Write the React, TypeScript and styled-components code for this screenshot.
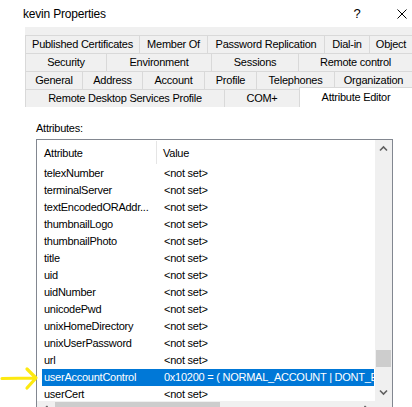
import React from "react";
import styled, { createGlobalStyle } from "styled-components";

const GlobalStyle = createGlobalStyle`
  html, body {
    margin: 0;
    padding: 0;
    background: #ffffff;
    overflow: hidden;
  }
  body {
    font-family: "Liberation Sans", Arial, sans-serif;
    font-size: 11px;
    color: #000;
  }
`;

const Window = styled.div`
  position: relative;
  width: 412px;
  height: 407px;
  overflow: hidden;
  background: #fff;
`;

const TitleBar = styled.div`
  height: 27px;
  display: flex;
  align-items: center;
  padding: 0 4px 0 23px;
  font-size: 12px;
  letter-spacing: -0.2px;
`;

const TitleText = styled.div`
  flex: 1;
  padding-top: 1px;
`;

const TitleButton = styled.div<{ gap?: number }>`
  width: 12px;
  height: 12px;
  display: flex;
  align-items: center;
  justify-content: center;
  margin-left: ${(p) => p.gap ?? 0}px;
  font-size: 13px;
`;

const TabControl = styled.div`
  margin-left: 25px;
  padding-top: 8px;
  background: #f0f0f0;
`;

const TabRow = styled.div`
  display: flex;
  height: 18px;
`;

const Tab = styled.div<{ w?: number; selected?: boolean }>`
  box-sizing: border-box;
  ${(p) => (p.w ? `width: ${p.w}px;` : "flex: 1;")}
  height: ${(p) => (p.selected ? 20 : 18)}px;
  margin-top: ${(p) => (p.selected ? -2 : 0)}px;
  position: relative;
  z-index: ${(p) => (p.selected ? 1 : 0)};
  background: ${(p) => (p.selected ? "#ffffff" : "#f0f0f0")};
  border-top: 1px solid #d9d9d9;
  border-left: 1px solid #d9d9d9;
  text-align: center;
  line-height: ${(p) => (p.selected ? 18 : 16)}px;
  letter-spacing: -0.25px;
  white-space: nowrap;
  overflow: hidden;
`;

const Panel = styled.div`
  padding: 0 19px 0 36px;
`;

const FieldLabel = styled.div`
  margin-top: 14px;
  line-height: 14px;
  letter-spacing: -0.25px;
`;

const ListBox = styled.div`
  margin-top: 4px;
  width: 357px;
  height: 290px;
  box-sizing: border-box;
  border: 1px solid #828790;
  display: grid;
  grid-template-columns: 338px 17px;
  grid-template-rows: 261px 17px;
`;

const ListArea = styled.div`
  overflow: hidden;
  display: flex;
  flex-direction: column;
`;

const Header = styled.div`
  height: 25px;
  display: flex;
  align-items: center;
  letter-spacing: -0.25px;
`;

const HeaderCell = styled.div<{ w?: number; pad: number }>`
  ${(p) => (p.w ? `width: ${p.w}px; border-right: 1px solid #e5e5e5;` : "flex: 1;")}
  box-sizing: border-box;
  height: 23px;
  line-height: 24px;
  padding-left: ${(p) => p.pad}px;
`;

const Rows = styled.div`
  flex: 1;
  overflow: hidden;
  padding: 0 1px 0 5px;
`;

const Row = styled.div<{ selected?: boolean }>`
  display: flex;
  height: 17px;
  line-height: 17px;
  letter-spacing: -0.25px;
  white-space: nowrap;
  background: ${(p) => (p.selected ? "#0078d7" : "transparent")};
  color: ${(p) => (p.selected ? "#ffffff" : "#000000")};
`;

const AttrCell = styled.div`
  width: 122px;
  box-sizing: border-box;
  padding-left: 2px;
  overflow: hidden;
`;

const ValueCell = styled.div`
  flex: 1;
  overflow: hidden;
`;

const VScroll = styled.div`
  background: #f0f0f0;
  display: flex;
  flex-direction: column;
`;

const ArrowBtn = styled.div`
  width: 17px;
  height: 17px;
  flex: none;
  display: flex;
  align-items: center;
  justify-content: center;
`;

const VTrack = styled.div`
  flex: 1;
`;

const VThumb = styled.div`
  width: 15px;
  height: 17px;
  margin-left: 1px;
  background: #cdcdcd;
`;

const HScroll = styled.div`
  grid-column: 1 / 3;
  background: #f0f0f0;
  display: flex;
`;

const HTrack = styled.div`
  flex: 1;
  padding-top: 1px;
`;

const HThumb = styled.div`
  height: 15px;
  background: #cdcdcd;
`;

const Pointer = styled.svg`
  position: absolute;
  left: 0;
  top: 366px;
`;

const Chevron = ({ dir }: { dir: "up" | "down" | "left" | "right" }) => {
  const rot = { up: 0, right: 90, down: 180, left: 270 }[dir];
  return (
    <svg width="9" height="9" viewBox="0 0 9 9" style={{ transform: `rotate(${rot}deg)` }}>
      <polyline points="1,6.5 4.5,3 8,6.5" fill="none" stroke="#606060" strokeWidth="1.6" />
    </svg>
  );
};

const tabRows: { label: string; w?: number; selected?: boolean }[][] = [
  [
    { label: "Published Certificates", w: 114 },
    { label: "Member Of", w: 68 },
    { label: "Password Replication", w: 117 },
    { label: "Dial-in", w: 45 },
    { label: "Object" },
  ],
  [
    { label: "Security", w: 81 },
    { label: "Environment", w: 105 },
    { label: "Sessions", w: 87 },
    { label: "Remote control" },
  ],
  [
    { label: "General", w: 57 },
    { label: "Address", w: 60 },
    { label: "Account", w: 62 },
    { label: "Profile", w: 52 },
    { label: "Telephones", w: 78 },
    { label: "Organization" },
  ],
  [
    { label: "Remote Desktop Services Profile", w: 199 },
    { label: "COM+", w: 75 },
    { label: "Attribute Editor", selected: true },
  ],
];

const NOT_SET = "<not set>";

const attributes: [string, string][] = [
  ["telexNumber", NOT_SET],
  ["terminalServer", NOT_SET],
  ["textEncodedORAddr...", NOT_SET],
  ["thumbnailLogo", NOT_SET],
  ["thumbnailPhoto", NOT_SET],
  ["title", NOT_SET],
  ["uid", NOT_SET],
  ["uidNumber", NOT_SET],
  ["unicodePwd", NOT_SET],
  ["unixHomeDirectory", NOT_SET],
  ["unixUserPassword", NOT_SET],
  ["url", NOT_SET],
  ["userAccountControl", "0x10200 = ( NORMAL_ACCOUNT | DONT_EXPIRE_PASSWORD )"],
  ["userCert", NOT_SET],
];

const selectedAttr = "userAccountControl";

export default function App() {
  // scroll positions of the list, as offsets into each track
  const vThumbTop = 193;
  const hThumb = { left: 1, width: 165 };

  return (
    <Window>
      <GlobalStyle />
      <TitleBar>
        <TitleText>kevin Properties</TitleText>
        <TitleButton>?</TitleButton>
        <TitleButton gap={33}>
          <svg width="10" height="10" viewBox="0 0 10 10">
            <path d="M0.5 0.5 L9.5 9.5 M9.5 0.5 L0.5 9.5" stroke="#000" strokeWidth="1" />
          </svg>
        </TitleButton>
      </TitleBar>

      <TabControl>
        {tabRows.map((row, i) => (
          <TabRow key={i}>
            {row.map((t) => (
              <Tab key={t.label} w={t.w} selected={t.selected}>
                {t.label}
              </Tab>
            ))}
          </TabRow>
        ))}
      </TabControl>

      <Panel>
        <FieldLabel>Attributes:</FieldLabel>
        <ListBox>
          <ListArea>
            <Header>
              <HeaderCell w={120} pad={7}>
                Attribute
              </HeaderCell>
              <HeaderCell pad={6}>Value</HeaderCell>
            </Header>
            <Rows>
              {attributes.map(([name, value]) => (
                <Row key={name} selected={name === selectedAttr}>
                  <AttrCell>{name}</AttrCell>
                  <ValueCell>{value}</ValueCell>
                </Row>
              ))}
            </Rows>
          </ListArea>
          <VScroll>
            <ArrowBtn>
              <Chevron dir="up" />
            </ArrowBtn>
            <VTrack>
              <VThumb style={{ marginTop: vThumbTop }} />
            </VTrack>
            <ArrowBtn>
              <Chevron dir="down" />
            </ArrowBtn>
          </VScroll>
          <HScroll>
            <ArrowBtn>
              <Chevron dir="left" />
            </ArrowBtn>
            <HTrack>
              <HThumb style={{ marginLeft: hThumb.left, width: hThumb.width }} />
            </HTrack>
            <ArrowBtn>
              <Chevron dir="right" />
            </ArrowBtn>
            <ArrowBtn />
          </HScroll>
        </ListBox>
      </Panel>

      <Pointer width="42" height="26" viewBox="0 0 42 26">
        <path
          d="M2 12.5 L35 12 M27 3 L36 12 L27 22"
          fill="none"
          stroke="#fde910"
          strokeWidth="3.2"
          strokeLinecap="round"
          strokeLinejoin="round"
        />
      </Pointer>
    </Window>
  );
}
